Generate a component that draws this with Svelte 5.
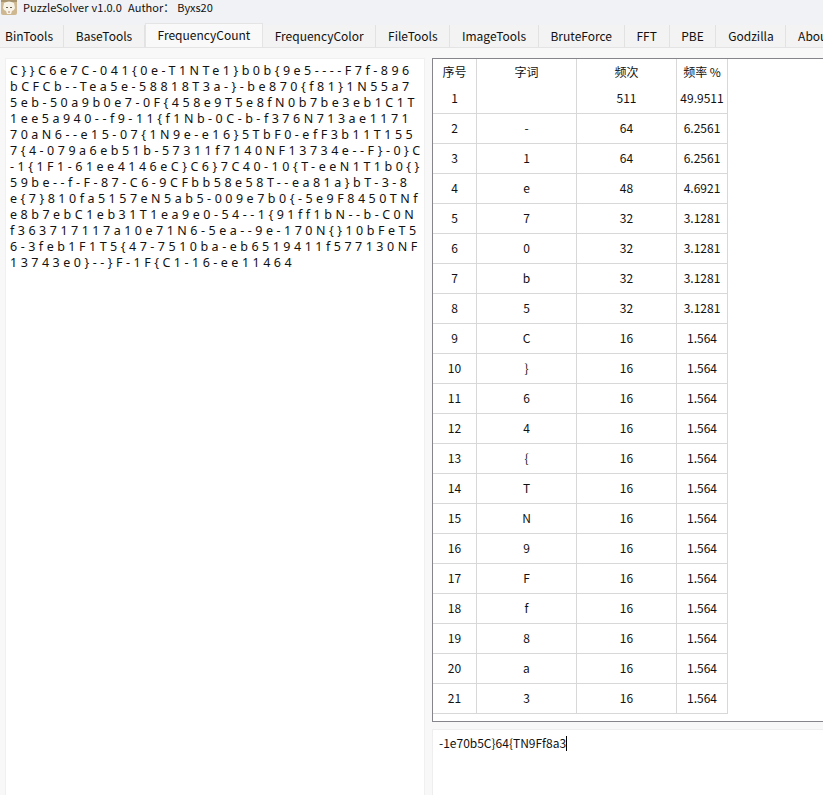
<script>
  const tabs = ['BinTools', 'BaseTools', 'FrequencyCount', 'FrequencyColor', 'FileTools', 'ImageTools', 'BruteForce', 'FFT', 'PBE', 'Godzilla', 'About'];

  const lines = [
    'C}}C6e7C-041{0e-T1NTe1}b0b{9e5----F7f-896',
    'bCFCb--Tea5e-58818T3a-}-be870{f81}1N55a7',
    '5eb-50a9b0e7-0F{458e9T5e8fN0b7be3eb1C1T',
    '1ee5a940--f9-11{f1Nb-0C-b-f376N713ae1171',
    '70aN6--e15-07{1N9e-e16}5TbF0-efF3b11T155',
    '7{4-079a6eb51b-57311f7140NF13734e--F}-0}C',
    '-1{1F1-61ee4146eC}C6}7C40-10{T-eeN1T1b0{}',
    '59be--f-F-87-C6-9CFbb58e58T--ea81a}bT-3-8',
    'e{7}810fa5157eN5ab5-009e7b0{-5e9F8450TNf',
    'e8b7ebC1eb31T1ea9e0-54--1{91ff1bN--b-C0N',
    'f363717117a10e71N6-5ea--9e-170N{}10bFeT5',
    '6-3feb1F1T5{47-7510ba-eb6519411f577130NF',
    '13743e0}--}F-1F{C1-16-ee11464'
  ];

  const rows = [
    ['1', '', '511', '49.9511'],
    ['2', '-', '64', '6.2561'],
    ['3', '1', '64', '6.2561'],
    ['4', 'e', '48', '4.6921'],
    ['5', '7', '32', '3.1281'],
    ['6', '0', '32', '3.1281'],
    ['7', 'b', '32', '3.1281'],
    ['8', '5', '32', '3.1281'],
    ['9', 'C', '16', '1.564'],
    ['10', '}', '16', '1.564'],
    ['11', '6', '16', '1.564'],
    ['12', '4', '16', '1.564'],
    ['13', '{', '16', '1.564'],
    ['14', 'T', '16', '1.564'],
    ['15', 'N', '16', '1.564'],
    ['16', '9', '16', '1.564'],
    ['17', 'F', '16', '1.564'],
    ['18', 'f', '16', '1.564'],
    ['19', '8', '16', '1.564'],
    ['20', 'a', '16', '1.564'],
    ['21', '3', '16', '1.564']
  ];
</script>

<div class="window">
  <header class="titlebar">
    <svg class="logo" viewBox="0 0 16 15" width="16" height="15" aria-hidden="true">
      <rect x="0" y="0" width="16" height="15" rx="2" fill="#cdb892" />
      <path d="M0 0 H16 V2 H0 Z" fill="#a8956f" />
      <path d="M3 3 Q8 0 13 3 L14 8 Q13 11 11 11 L10 14 H6 L5 11 Q3 11 2 8 Z" fill="#f7f3e8" />
      <rect x="5" y="7" width="2" height="1" fill="#6d6252" />
      <rect x="9" y="7" width="2" height="1" fill="#6d6252" />
      <rect x="7" y="11" width="2" height="2" fill="#d7b9a8" />
    </svg>
    <span>PuzzleSolver v1.0.0&nbsp; Author： Byxs20</span>
  </header>

  <nav class="tabs">
    {#each tabs as tab}
      <div class="tab" class:active={tab === 'FrequencyCount'}>{tab}</div>
    {/each}
  </nav>

  <main class="content">
    <section class="source">
      {#each lines as line}
        <div>{line}</div>
      {/each}
    </section>

    <section class="side">
      <div class="table-box">
        <table>
          <thead>
            <tr>
              <th class="c1">序号</th>
              <th class="c2">字词</th>
              <th class="c3">频次</th>
              <th class="c4">频率 %</th>
            </tr>
          </thead>
          <tbody>
            {#each rows as row}
              <tr>
                {#each row as cell}
                  <td>{cell}</td>
                {/each}
              </tr>
            {/each}
          </tbody>
        </table>
      </div>
      <div class="result">-1e70b5C}64{'{'}TN9Ff8a3<i class="caret"></i></div>
    </section>
  </main>
</div>

<style>
  :global(body) {
    margin: 0;
    overflow: hidden;
  }

  .window {
    width: 823px;
    height: 795px;
    display: flex;
    flex-direction: column;
    overflow: hidden;
    background: #f0f2f5;
    color: #111;
    font-family: 'Noto Sans CJK SC', 'Noto Sans', sans-serif;
    font-size: 12px;
  }

  .titlebar {
    height: 23px;
    flex: none;
    box-sizing: border-box;
    display: flex;
    align-items: flex-start;
    gap: 6px;
    padding-left: 1px;
    font-size: 11px;
    line-height: 15px;
    word-spacing: 0.7px;
  }

  .logo {
    flex: none;
  }

  .tabs {
    height: 24px;
    flex: none;
    display: flex;
    align-items: flex-end;
    white-space: nowrap;
    overflow: hidden;
    border-bottom: 1px solid #e4e4e4;
  }

  .tab {
    height: 22px;
    flex: none;
    line-height: 22px;
    padding: 0 10px 0 5px;
    background: #f3f3f3;
    border-right: 1px solid #e2e2e2;
    box-sizing: border-box;
  }

  .tab:not(:first-child) {
    padding: 0 11.7px;
  }

  .tab.active {
    height: 24px;
    line-height: 22px;
    background: #f9f9f9;
    border: 1px solid #e4e4e4;
    border-bottom: none;
  }

  .content {
    flex: 1;
    min-height: 0;
    display: flex;
    gap: 7px;
    padding: 10px 0 0 5px;
    background: #f8f8f8;
  }

  .source {
    width: 420px;
    flex: none;
    box-sizing: border-box;
    padding: 4px 4px;
    background: #fff;
    border: 1px solid #f0f0f0;
    border-bottom: none;
    font-family: 'Noto Sans', sans-serif;
    font-size: 12.5px;
    line-height: 16px;
    letter-spacing: 3.5px;
    white-space: pre;
    overflow: hidden;
  }

  .side {
    flex: 1;
    min-width: 0;
    display: flex;
    flex-direction: column;
    gap: 7px;
  }

  .table-box {
    height: 664px;
    flex: none;
    box-sizing: border-box;
    background: #fff;
    border: 1px solid #85858b;
    border-right: none;
  }

  table {
    border-collapse: collapse;
    table-layout: fixed;
    width: 295px;
  }

  th {
    height: 25px;
    padding: 0;
    font-weight: 400;
    border-right: 1px solid #d8d8d8;
  }

  td {
    height: 27px;
    padding: 0 0 2px;
    text-align: center;
    border-right: 1px solid #d8d8d8;
    border-bottom: 1px solid #d8d8d8;
  }

  .c1 {
    width: 43px;
  }

  .c2,
  .c3 {
    width: 99px;
  }

  .c4 {
    width: 50px;
  }

  .result {
    flex: 1;
    padding: 4px 7px 4px 6px;
    background: #fff;
    border-top: 1px solid #eee;
    border-left: 1px solid #eee;
  }

  .caret {
    display: inline-block;
    width: 1px;
    height: 15px;
    vertical-align: -3px;
    background: #000;
  }
</style>
